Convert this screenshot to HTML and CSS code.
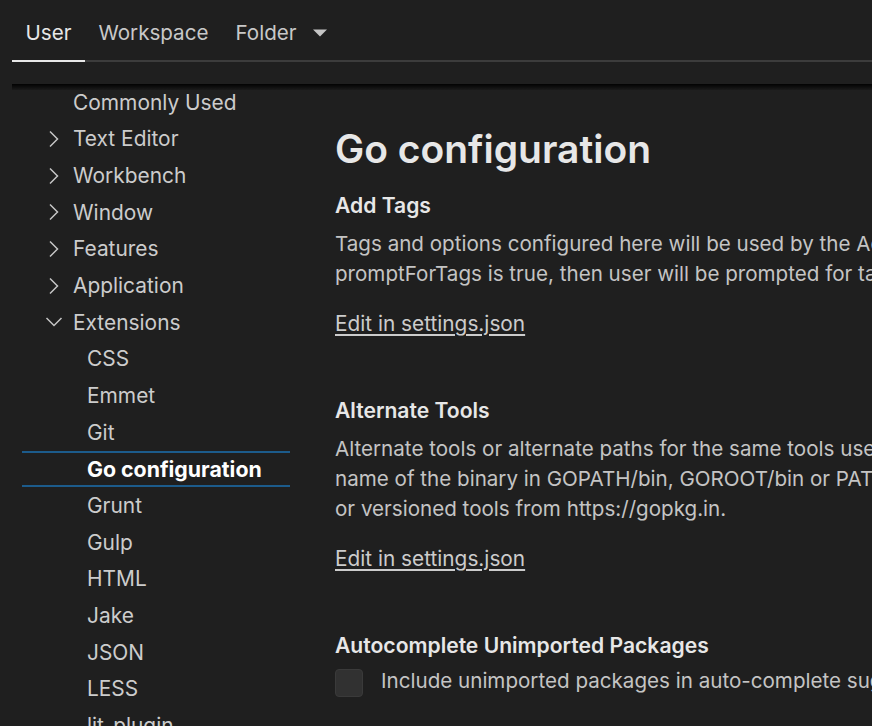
FILE: index.html
```html
<!DOCTYPE html>
<html lang="en">
<head>
    <meta charset="UTF-8">
    <meta name="viewport" content="width=device-width, initial-scale=1.0">
    <title>Settings</title>
    <link rel="stylesheet" href="styles.css">
</head>
<body>
    <div class="settings">
        <div class="tabs">
            <div class="tab active">User</div>
            <div class="tab">Workspace</div>
            <div class="tab">Folder
                <svg class="tab-dropdown" width="16" height="10" viewBox="0 0 16 10"><path d="M1 1.5h14L8 8.5z" fill="#c5c5c5"/></svg>
            </div>
        </div>

        <div class="body">
            <div class="scroll-shadow"></div>

            <div class="tree">
                <div class="row"><span class="twistie"></span>Commonly Used</div>
                <div class="row"><span class="twistie"><svg width="24" height="24" viewBox="0 0 24 24"><path d="M8 4.5l7.5 7.5L8 19.5" /></svg></span>Text Editor</div>
                <div class="row"><span class="twistie"><svg width="24" height="24" viewBox="0 0 24 24"><path d="M8 4.5l7.5 7.5L8 19.5" /></svg></span>Workbench</div>
                <div class="row"><span class="twistie"><svg width="24" height="24" viewBox="0 0 24 24"><path d="M8 4.5l7.5 7.5L8 19.5" /></svg></span>Window</div>
                <div class="row"><span class="twistie"><svg width="24" height="24" viewBox="0 0 24 24"><path d="M8 4.5l7.5 7.5L8 19.5" /></svg></span>Features</div>
                <div class="row"><span class="twistie"><svg width="24" height="24" viewBox="0 0 24 24"><path d="M8 4.5l7.5 7.5L8 19.5" /></svg></span>Application</div>
                <div class="row"><span class="twistie"><svg width="24" height="24" viewBox="0 0 24 24"><path d="M4.5 8l7.5 7.5L19.5 8" /></svg></span>Extensions</div>
                <div class="row child">CSS</div>
                <div class="row child">Emmet</div>
                <div class="row child">Git</div>
                <div class="row child selected">Go configuration</div>
                <div class="row child">Grunt</div>
                <div class="row child">Gulp</div>
                <div class="row child">HTML</div>
                <div class="row child">Jake</div>
                <div class="row child">JSON</div>
                <div class="row child">LESS</div>
                <div class="row child">lit-plugin</div>
            </div>

            <div class="content">
                <h1 class="page-title">Go configuration</h1>

                <div class="setting">
                    <div class="setting-title">Add Tags</div>
                    <p class="setting-desc">Tags and options configured here will be used by the Add Tags command to add tags to struct fields. If<br>promptForTags is true, then user will be prompted for tag and options. By default, json tags are added.</p>
                    <a class="setting-link" href="#">Edit in settings.json</a>
                </div>

                <div class="setting">
                    <div class="setting-title">Alternate Tools</div>
                    <p class="setting-desc">Alternate tools or alternate paths for the same tools used by the Go extension. Provide either absolute path or the<br>name of the binary in GOPATH/bin, GOROOT/bin or PATH. Useful when you want to use wrapper script for the Go tools<br>or versioned tools from https://gopkg.in.</p>
                    <a class="setting-link" href="#">Edit in settings.json</a>
                </div>

                <div class="setting">
                    <div class="setting-title">Autocomplete Unimported Packages</div>
                    <label class="setting-check">
                        <span class="checkbox"></span>
                        Include unimported packages in auto-complete suggestions. Not applicable when using the language server.
                    </label>
                </div>
            </div>
        </div>
    </div>
</body>
</html>
```

FILE: styles.css
```css
body {
    margin: 0;
    background-color: #1f1f1f;
    color: #cccccc;
    font-family: Inter, "Noto Sans", sans-serif;
    font-size: 20px;
    overflow: hidden;
}

.settings {
    padding-left: 12px;
    width: 1400px;
}

/* scope tabs */
.tabs {
    display: flex;
    padding-top: 18px;
    border-bottom: 2px solid #3c3c3c;
}

.tab {
    display: flex;
    align-items: center;
    font-size: 20.6px;
    line-height: 30px;
    padding: 0 13.5px 12px;
    margin-bottom: -2px;
    border-bottom: 2px solid transparent;
    color: #c8c8c8;
}

.tab.active {
    color: #e7e7e7;
    border-bottom-color: #e7e7e7;
}

.tab-dropdown {
    margin-left: 15px;
}

/* tree + editor */
.body {
    position: relative;
    display: flex;
    margin-top: 22px;
}

.scroll-shadow {
    position: absolute;
    top: 0;
    left: 0;
    right: 0;
    height: 6px;
    background: linear-gradient(rgba(0, 0, 0, 0.95), rgba(0, 0, 0, 0.15));
}

.tree {
    width: 268px;
    margin-left: 10px;
    flex-shrink: 0;
    font-size: 20.9px;
}

.row {
    display: flex;
    align-items: center;
    height: 36.67px;
    padding-left: 20px;
    white-space: nowrap;
}

.row.child {
    padding-left: 65px;
}

.row.selected {
    color: #ffffff;
    font-weight: 700;
    font-size: 21.3px;
    box-shadow: inset 0 2px #1c5b8b, inset 0 -2px #1c5b8b;
}

.twistie {
    width: 24px;
    height: 24px;
    margin-right: 7px;
}

.twistie svg {
    display: block;
    fill: none;
    stroke: #c5c5c5;
    stroke-width: 1.5;
}

.content {
    margin-left: 45px;
    flex: 1;
}

.page-title {
    margin: 41px 0 0;
    font-size: 39px;
    line-height: 48px;
    font-weight: 600;
    color: #e7e7e7;
}

.setting {
    padding-top: 18px;
    padding-bottom: 39px;
}

.setting-title {
    font-size: 21.1px;
    line-height: 30px;
    font-weight: 600;
    color: #e7e7e7;
}

.setting-desc {
    margin: 8px 0 0;
    font-size: 20.6px;
    line-height: 30px;
    white-space: nowrap;
    color: #c4c4c4;
}

.setting-link {
    display: inline-block;
    margin-top: 20px;
    font-size: 20.8px;
    line-height: 30px;
    color: #cccccc;
    text-decoration: underline;
    text-underline-offset: 3px;
}

.setting-check {
    display: flex;
    align-items: flex-start;
    margin-top: 8px;
    font-size: 20.6px;
    line-height: 24px;
    white-space: nowrap;
    color: #c4c4c4;
}

.checkbox {
    width: 28px;
    height: 28px;
    margin-right: 18px;
    border-radius: 4px;
    background-color: #313131;
    border: 1px solid #3a3a3a;
    box-sizing: border-box;
}
```
